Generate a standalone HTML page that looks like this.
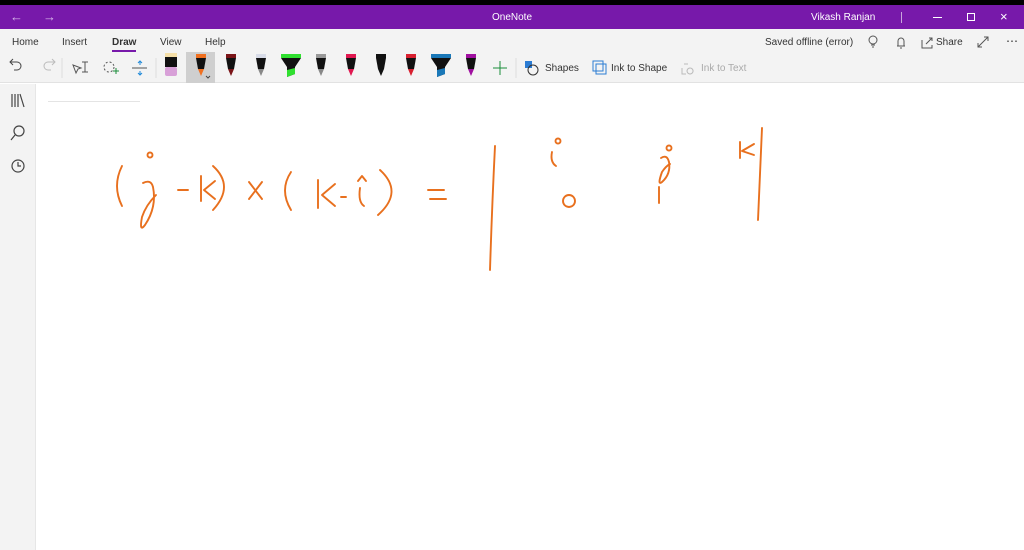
<!DOCTYPE html>
<html><head><meta charset="utf-8"><style>
*{margin:0;padding:0;box-sizing:border-box}
body{width:1024px;height:550px;overflow:hidden;background:#fff;font-family:"Liberation Sans",sans-serif;position:relative}
.abs{position:absolute}
.t{font-size:10px;color:#333;position:absolute;white-space:nowrap}
</style></head><body>
<div class="abs" style="left:0;top:0;width:1024px;height:5px;background:#000"></div>
<div class="abs" style="left:0;top:5px;width:1024px;height:24px;background:#7719aa"></div>
<div class="t" style="left:10px;top:9px;color:#d8b8ea;font-size:13px">&#8592;</div>
<div class="t" style="left:43px;top:9px;color:#d8b8ea;font-size:13px">&#8594;</div>
<div class="t" style="left:492px;top:12px;color:#fff;font-size:10px">OneNote</div>
<div class="t" style="left:811px;top:12px;color:#fff;font-size:10px">Vikash Ranjan</div>
<div class="abs" style="left:901px;top:12px;width:1px;height:11px;background:#c9a6dc"></div>
<div class="abs" style="left:933px;top:17px;width:9px;height:1px;background:#fff"></div>
<div class="abs" style="left:967px;top:13px;width:8px;height:8px;border:1px solid #fff"></div>
<div class="t" style="left:1000px;top:9px;color:#fff;font-size:13px">&#215;</div>
<div class="abs" style="left:0;top:29px;width:1024px;height:54px;background:#f3f3f3;border-bottom:1px solid #e2e2e2"></div>
<div class="t" style="left:12px;top:37px">Home</div>
<div class="t" style="left:62px;top:37px">Insert</div>
<div class="t" style="left:112px;top:37px;font-weight:bold">Draw</div>
<div class="abs" style="left:112px;top:50px;width:24px;height:2px;background:#7719aa"></div>
<div class="t" style="left:160px;top:37px">View</div>
<div class="t" style="left:205px;top:37px">Help</div>
<div class="t" style="left:765px;top:37px">Saved offline (error)</div>
<div class="t" style="left:936px;top:37px">Share</div>
<div class="t" style="left:1006px;top:34px;font-size:12px">&#8943;</div>
<svg class="abs" style="left:0;top:29px" width="1024" height="54" viewBox="0 29 1024 54">
<g fill="none" stroke="#555" stroke-width="1">
<circle cx="873" cy="40" r="4"/><path d="M871 45h4M872 47h2"/>
<path d="M897 46h8M898 46v-5a3 3 0 0 1 6 0v5M900 48h2"/>
<path d="M922 40v8h10v-3M926 44l6-6M929 38h3v3"/>
<path d="M978 47l10-10M978 43v4h4M984 37h4v4"/>
<path d="M13 65l-3-3 3-3M10 62h7a4 4 0 0 1 0 8h-3" stroke="#444"/>
<path d="M52 65l3-3-3-3M55 62h-7a4 4 0 0 0 0 8h3" stroke="#bbb"/>
<path d="M76 73l-3-8 8 3-3 1z M82 62h6M85 62v10M82 72h6"/>
<circle cx="109" cy="67" r="5" stroke-dasharray="2 2"/>
<path d="M113 71h6M116 68v6" stroke="#1a8c3a"/>
<path d="M132 68h15" /><path d="M140 61v4M138 63l2-2 2 2M140 71v4M138 73l2 2 2-2" stroke="#1e88d8"/>
<path d="M493 68h14M500 61v14" stroke="#1a8c3a"/>
<path d="M62 58v20M156 58v20M516 58v20" stroke="#ddd"/>
<rect x="525" y="61" width="7" height="7" fill="#2b7cd3" stroke="none"/><circle cx="533" cy="70" r="5" stroke="#333"/>
<path d="M593 61h10v10h-10zM596 64h10v10h-10z" stroke="#2b7cd3"/>
<path d="M684 64h4M682 68v6h4M690 68a3 3 0 1 0 0.1 0" stroke="#bbb"/>
</g>
<rect x="186" y="52" width="29" height="31" fill="#cfcfcf"/>
<rect x="165" y="53" width="12" height="4" fill="#f5dfa8"/>
<rect x="165" y="57" width="12" height="10" fill="#111"/>
<rect x="165" y="67" width="12" height="9" rx="2" fill="#d8a0d8"/>
<path d="M206 76l2 2 2-2" stroke="#444" fill="none"/>
<g id="pens"></g>
</svg>
<div class="t" style="left:545px;top:63px">Shapes</div>
<div class="t" style="left:611px;top:63px">Ink to Shape</div>
<div class="t" style="left:701px;top:63px;color:#aaa">Ink to Text</div>
<div class="abs" style="left:0;top:84px;width:36px;height:466px;background:#f3f3f3;border-right:1px solid #e6e6e6"></div>
<svg class="abs" style="left:0;top:84px" width="36" height="100" fill="none" stroke="#444" stroke-width="1.2">
<path d="M12 10v13M15 10v13M18 10v13M20 10l4 13"/>
<circle cx="19" cy="47" r="5"/><path d="M15 51l-4 5"/>
<circle cx="18" cy="82" r="6"/><path d="M18 78v4h3"/>
</svg>
<div class="abs" style="left:48px;top:101px;width:92px;height:1px;background:#e4e4e4"></div>
<svg class="abs" style="left:0;top:0" width="1024" height="550">
<g fill="none" stroke="#e8701e" stroke-width="1.9" stroke-linecap="round" stroke-linejoin="round">
<path d="M122 166q-10 20 0 40"/>
<path d="M143 183q8 -4 10 4q4 20 -8 38q-6 8 -3-8q4-12 14-22"/><circle cx="150" cy="155" r="2.5"/>
<path d="M178 190h10"/>
<path d="M201 176v25M215 181l-11 9 11 9"/>
<path d="M213 166q22 20 0 44"/>
<path d="M249 182l13 17M262 182l-13 17"/>
<path d="M291 172q-12 18 0 38"/>
<path d="M318 180v28M335 184l-13 11 13 11"/>
<path d="M341 197h5"/>
<path d="M360 188q-2 14 4 18M358 181l4-5 4 5"/>
<path d="M380 170q24 22 -2 45"/>
<path d="M428 190h16M430 199h16"/>
<path d="M495 146q-3 60 -5 124"/>
<path d="M552 152q-2 10 4 14"/><circle cx="558" cy="141" r="2.5"/>
<ellipse cx="569" cy="201" rx="6" ry="6"/>
<path d="M661 158q6 -4 8 4q2 12 -7 20q-5 4 0-10q4-6 8-8"/><circle cx="669" cy="148" r="2.5"/>
<path d="M659 187v16"/>
<path d="M740 142v16M754 144l-12 7 12 4"/>
<path d="M762 128q-2 50 -4 92"/>
</g></svg>
<script>
var g=document.getElementById('pens');var ns='http://www.w3.org/2000/svg';
function el(t,a){var e=document.createElementNS(ns,t);for(var k in a)e.setAttribute(k,a[k]);g.appendChild(e);}
var pens=[[201,'#f07020','#f07020',0],[231,'#7a1418','#7a1418',0],[261,'#d8dce8','#888',0],[291,'#30e030','#30e030',1],[321,'#999','#888',0],[351,'#e01850','#e01850',0],[381,'#111','#111',0],[411,'#d82030','#d82030',0],[441,'#1a78b8','#1a78b8',1],[471,'#a010a0','#a010a0',0]];
pens.forEach(function(p){var x=p[0];
if(p[3]){el('rect',{x:x-10,y:54,width:20,height:4,fill:p[1]});el('polygon',{points:(x-10)+',58 '+(x+10)+',58 '+(x+4)+',67 '+(x+4)+',74 '+(x-4)+',77 '+(x-4)+',67',fill:'#111'});el('polygon',{points:(x-4)+',70 '+(x+4)+',68 '+(x+4)+',74 '+(x-4)+',77',fill:p[2]});}
else{el('rect',{x:x-5,y:54,width:10,height:4,fill:p[1]});el('polygon',{points:(x-5)+',58 '+(x+5)+',58 '+(x+3)+',69 '+(x-3)+',69',fill:'#111'});el('polygon',{points:(x-3)+',69 '+(x+3)+',69 '+x+',76',fill:p[2]});}
});
</script>
</body></html>
